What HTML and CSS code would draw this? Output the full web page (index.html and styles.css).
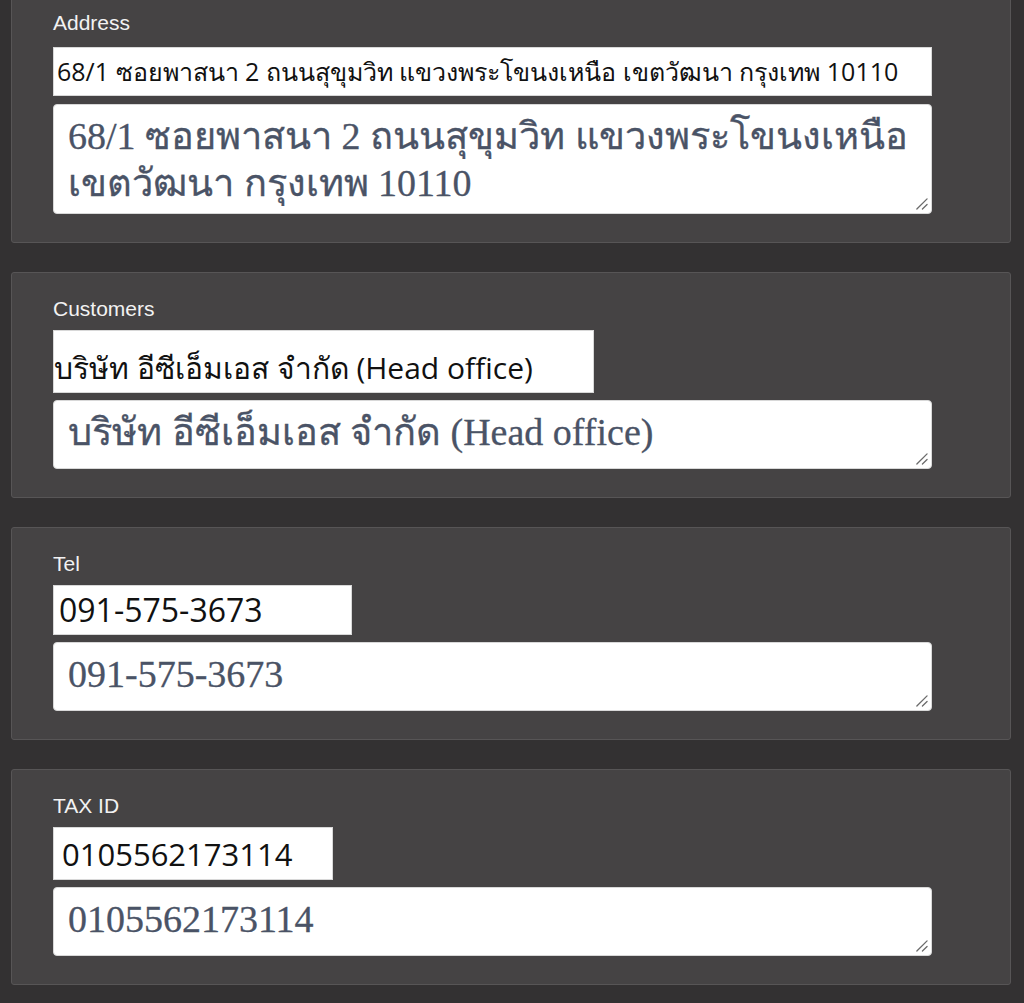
FILE: index.html
```html
<!DOCTYPE html>
<html lang="th">
<head>
<meta charset="utf-8">
<title>Customer form</title>
<link rel="stylesheet" href="styles.css">
</head>
<body>
<main class="page">
  <section class="card">
    <label class="label" for="addr">Address</label>
    <input id="addr" class="field field-address" type="text" value="68/1 ซอยพาสนา 2 ถนนสุขุมวิท แขวงพระโขนงเหนือ เขตวัฒนา กรุงเทพ 10110">
    <div class="area-wrap area-wrap-tall">
      <textarea class="area area-tall">68/1 ซอยพาสนา 2 ถนนสุขุมวิท แขวงพระโขนงเหนือ เขตวัฒนา กรุงเทพ 10110</textarea>
      <svg class="grip" viewBox="0 0 14 14" aria-hidden="true"><path d="M2 13 L13 2 M8 13 L13 8"/></svg>
    </div>
  </section>
  <section class="card">
    <label class="label" for="cust">Customers</label>
    <input id="cust" class="field field-customer" type="text" value="บริษัท อีซีเอ็มเอส จำกัด (Head office)">
    <div class="area-wrap">
      <textarea class="area">บริษัท อีซีเอ็มเอส จำกัด (Head office)</textarea>
      <svg class="grip" viewBox="0 0 14 14" aria-hidden="true"><path d="M2 13 L13 2 M8 13 L13 8"/></svg>
    </div>
  </section>
  <section class="card">
    <label class="label" for="tel">Tel</label>
    <input id="tel" class="field field-tel" type="text" value="091-575-3673">
    <div class="area-wrap">
      <textarea class="area">091-575-3673</textarea>
      <svg class="grip" viewBox="0 0 14 14" aria-hidden="true"><path d="M2 13 L13 2 M8 13 L13 8"/></svg>
    </div>
  </section>
  <section class="card">
    <label class="label" for="tax">TAX ID</label>
    <input id="tax" class="field field-tax" type="text" value="0105562173114">
    <div class="area-wrap">
      <textarea class="area">0105562173114</textarea>
      <svg class="grip" viewBox="0 0 14 14" aria-hidden="true"><path d="M2 13 L13 2 M8 13 L13 8"/></svg>
    </div>
  </section>
</main>
</body>
</html>
```

FILE: styles.css
```css
html, body {
  margin: 0;
  padding: 0;
  background: #333132;
}

body {
  height: 1003px;
  overflow: hidden;
}

.page {
  display: flex;
  flex-direction: column;
  gap: 29px;
  margin-top: -11px;
  padding: 0 13px 0 11px;
}

.card {
  display: flex;
  flex-direction: column;
  align-items: flex-start;
  gap: 7px;
  width: 1000px;
  box-sizing: border-box;
  padding: 25px 79px 28px 41px;
  background: #454344;
  border: 1px solid #575556;
  border-radius: 3px;
}

.label {
  display: block;
  font-family: "Liberation Sans", Arial, sans-serif;
  font-size: 21px;
  line-height: 22px;
  color: #f2f2f2;
  margin-bottom: 3px;
}

.card:first-child .label {
  margin-top: -3px;
  margin-bottom: 6px;
}

.field {
  display: block;
  box-sizing: border-box;
  margin: 0;
  border: 1px solid #d8d8d8;
  border-radius: 0;
  background: #ffffff;
  color: #111111;
  font-family: "Open Sans", "Noto Sans", sans-serif;
  outline: none;
}

.field-address {
  width: 879px;
  height: 49px;
  padding: 0 3px;
  font-size: 25px;
}

.field-customer {
  width: 541px;
  height: 63px;
  padding: 14px 0 0 0;
  font-size: 30px;
}

.field-tel {
  width: 299px;
  height: 50px;
  padding: 0 5px 2px;
  font-size: 32px;
}

.field-tax {
  width: 280px;
  height: 53px;
  padding: 0 8px;
  font-size: 31px;
}

.area-wrap {
  position: relative;
  width: 879px;
  height: 69px;
}

.area-wrap-tall {
  height: 110px;
  margin-top: 1px;
}

.area {
  display: block;
  box-sizing: border-box;
  width: 100%;
  height: 100%;
  margin: 0;
  padding: 8px 14px 0;
  border: 1px solid #d8d8d8;
  border-radius: 4px;
  background: #ffffff;
  color: #4a5366;
  font-family: "Liberation Serif", "Times New Roman", serif;
  font-size: 38px;
  line-height: 47px;
  overflow: hidden;
  resize: none;
  outline: none;
  -webkit-text-stroke: 0.3px #4a5366;
}

.grip {
  position: absolute;
  right: 4px;
  bottom: 4px;
  width: 13px;
  height: 13px;
  fill: none;
  stroke: #6b6b6b;
  stroke-width: 1.4;
  stroke-linecap: round;
  pointer-events: none;
}
```
